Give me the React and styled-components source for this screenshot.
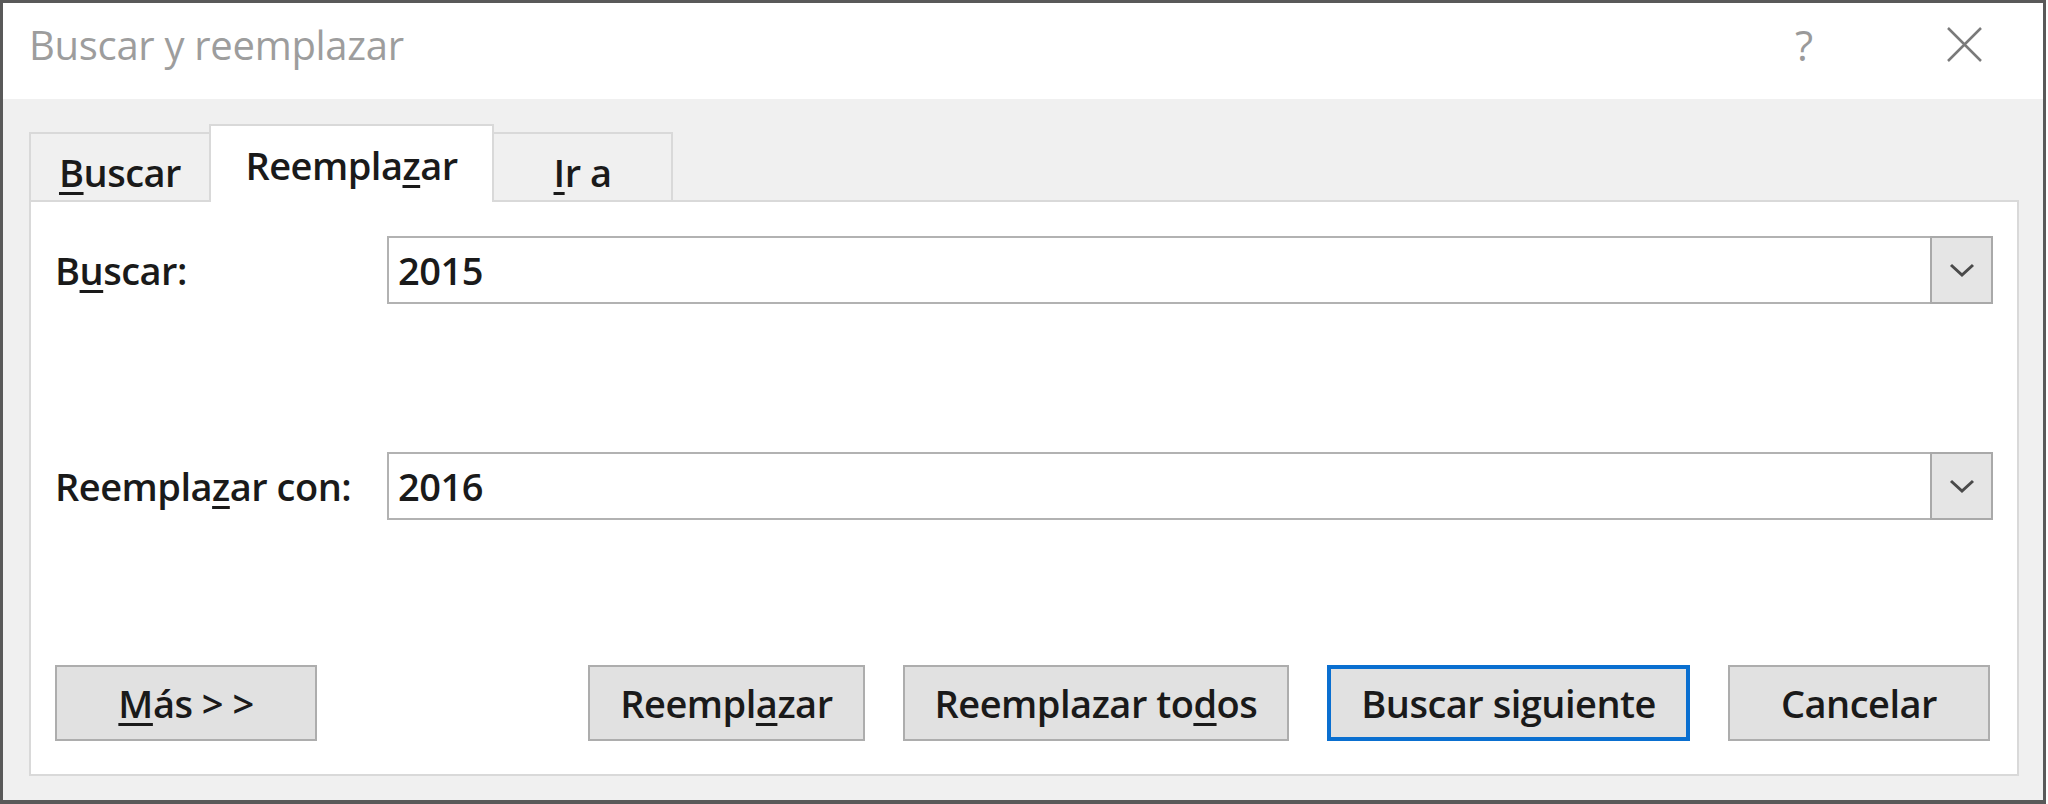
import React from "react";
import styled, { createGlobalStyle } from "styled-components";

const Global = createGlobalStyle`
  html, body { margin: 0; padding: 0; background: #ffffff; }
  body { font-family: "Open Sans", "Noto Sans", sans-serif; }
  * { box-sizing: border-box; }
`;

const Window = styled.div`
  width: 2046px;
  height: 804px;
  border: 3px solid #595959;
  border-bottom-width: 4px;
  display: flex;
  flex-direction: column;
  background: #f0f0f0;
`;

const TitleBar = styled.div`
  height: 96px;
  background: #ffffff;
  display: flex;
  align-items: center;
  padding: 0 0 14px 26px;
`;

const Title = styled.div`
  font-size: 40px;
  color: #9d9d9d;
  letter-spacing: -0.3px;
  flex: 1;
`;

const HelpGlyph = styled.div`
  font-size: 42px;
  color: #9a9a9a;
  width: 40px;
  text-align: center;
  margin-right: 122px;
`;

const CloseBox = styled.div`
  width: 37px;
  height: 37px;
  margin-right: 60px;
  display: flex;
`;

const Body = styled.div`
  flex: 1;
  display: flex;
  flex-direction: column;
  padding: 0 24px 24px 26px;
`;

const TabStrip = styled.div`
  height: 101px;
  display: flex;
  align-items: flex-end;
`;

const Tab = styled.div`
  position: relative;
  height: ${(p) => (p.$active ? "78px" : "68px")};
  margin-bottom: ${(p) => (p.$active ? "-2px" : "0")};
  width: ${(p) => p.$w}px;
  background: ${(p) => (p.$active ? "#ffffff" : "#f0f0f0")};
  border: 2px solid #d9d9d9;
  border-bottom: none;
  ${(p) => (p.$active ? "" : "border-left: none;")}
  ${(p) => (p.$first ? "border-left: 2px solid #d9d9d9;" : "")}
  ${(p) => (p.$beforeActive ? "border-right: none;" : "")}
  z-index: ${(p) => (p.$active ? 2 : 1)};
  display: flex;
  justify-content: center;
  align-items: flex-start;
  padding-top: ${(p) => (p.$active ? "13px" : "12px")};
  font-size: 38px;
  color: #1a1a1a;
  font-weight: 550;
  letter-spacing: -0.5px;
`;

const Panel = styled.div`
  flex: 1;
  background: #ffffff;
  border: 2px solid #d9d9d9;
  padding: 34px 24px 33px 24px;
  display: flex;
  flex-direction: column;
`;

const FieldRow = styled.div`
  display: grid;
  grid-template-columns: 332px 1fr;
  align-items: center;
  margin-bottom: ${(p) => p.$gap}px;
`;

const Label = styled.div`
  font-size: 38px;
  font-weight: 550;
  letter-spacing: -0.5px;
  color: #1a1a1a;
`;

const Combo = styled.div`
  height: 68px;
  border: 2px solid #b2b2b2;
  display: flex;
  background: #ffffff;
`;

const ComboText = styled.div`
  flex: 1;
  font-size: 38px;
  font-weight: 550;
  letter-spacing: -0.5px;
  color: #1a1a1a;
  padding-left: 9px;
  display: flex;
  align-items: center;
  padding-bottom: 1px;
`;

const DropButton = styled.div`
  width: 63px;
  margin: -2px -2px -2px 0;
  border: 2px solid #a9a9a9;
  background: #e5e5e5;
  display: flex;
  align-items: center;
  justify-content: center;
`;

const ButtonRow = styled.div`
  display: flex;
  align-items: center;
  gap: 38px;
  padding-right: 3px;
  margin-top: auto;
`;

const Spacer = styled.div`
  flex: 1;
`;

const Button = styled.div`
  height: 76px;
  min-width: 262px;
  padding: 0 30px 1px;
  background: #e1e1e1;
  border: ${(p) => (p.$default ? "4px solid #0a6fd0" : "2px solid #adadad")};
  display: flex;
  align-items: center;
  justify-content: center;
  font-size: 38px;
  font-weight: 550;
  letter-spacing: -0.5px;
  color: #1a1a1a;
  white-space: nowrap;
`;

const Key = styled.span`
  text-decoration: underline;
  text-decoration-thickness: 3px;
  text-underline-offset: 5px;
`;

const Chevron = () => (
  <svg width="26" height="16" viewBox="0 0 26 16">
    <path d="M2 3 L13 13 L24 3" fill="none" stroke="#4a4a4a" strokeWidth="3" />
  </svg>
);

const CloseIcon = () => (
  <svg width="37" height="37" viewBox="0 0 37 37">
    <path d="M2 2 L35 35 M35 2 L2 35" stroke="#7a7a7a" strokeWidth="2.5" fill="none" />
  </svg>
);

export default function App() {
  return (
    <>
      <Global />
      <Window>
        <TitleBar>
          <Title>Buscar y reemplazar</Title>
          <HelpGlyph>?</HelpGlyph>
          <CloseBox>
            <CloseIcon />
          </CloseBox>
        </TitleBar>
        <Body>
          <TabStrip>
            <Tab $w={180} $first $beforeActive>
              <span>
                <Key>B</Key>uscar
              </span>
            </Tab>
            <Tab $w={285} $active>
              <span>
                Reempla<Key>z</Key>ar
              </span>
            </Tab>
            <Tab $w={179}>
              <span>
                <Key>I</Key>r a
              </span>
            </Tab>
          </TabStrip>
          <Panel>
            <FieldRow $gap={148}>
              <Label>
                B<Key>u</Key>scar:
              </Label>
              <Combo>
                <ComboText>2015</ComboText>
                <DropButton>
                  <Chevron />
                </DropButton>
              </Combo>
            </FieldRow>
            <FieldRow $gap={0}>
              <Label>
                Reempla<Key>z</Key>ar con:
              </Label>
              <Combo>
                <ComboText>2016</ComboText>
                <DropButton>
                  <Chevron />
                </DropButton>
              </Combo>
            </FieldRow>
            <ButtonRow>
              <Button>
                <span>
                  <Key>M</Key>ás &gt; &gt;
                </span>
              </Button>
              <Spacer />
              <Button>
                <span>
                  Reempl<Key>a</Key>zar
                </span>
              </Button>
              <Button>
                <span>
                  Reemplazar to<Key>d</Key>os
                </span>
              </Button>
              <Button $default>
                <span>
                  Buscar si<Key>g</Key>uiente
                </span>
              </Button>
              <Button>
                <span>Cancelar</span>
              </Button>
            </ButtonRow>
          </Panel>
        </Body>
      </Window>
    </>
  );
}
